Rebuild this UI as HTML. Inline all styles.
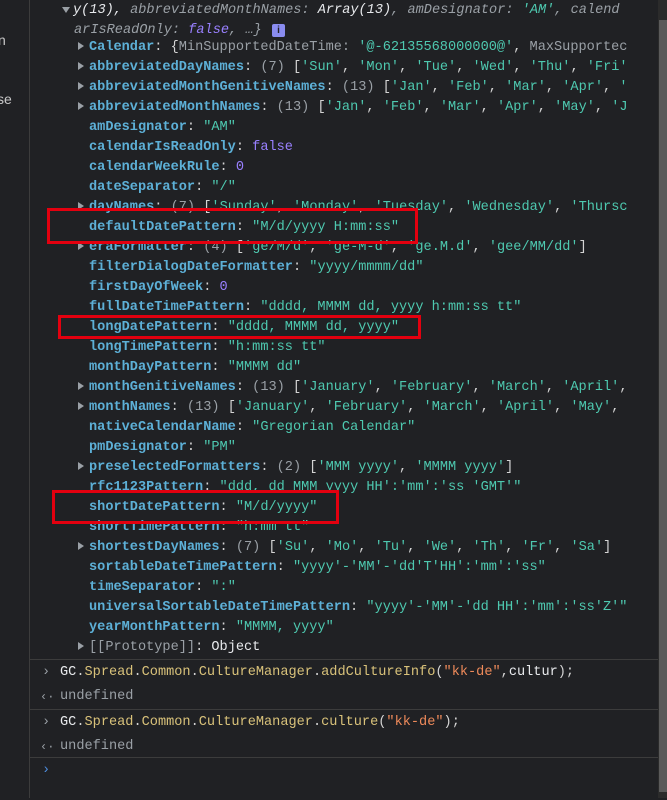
<!DOCTYPE html>
<html><head><meta charset="utf-8"><style>
html,body{margin:0;padding:0}
body{width:667px;height:798px;background:#202124;overflow:hidden;position:relative;font-family:"Liberation Mono",monospace;font-size:13.6px;color:#d4d4d4}
#c{position:absolute;left:0;top:2px;width:667px;height:798px}
.l{position:absolute;white-space:pre;height:20px;line-height:20px}
.k{color:#5db0d7;font-weight:bold}
.s{color:#4ec9b0}
.n{color:#9980ff}
.g{color:#9aa0a6}
.w{color:#e8eaed}
.y{color:#d9c27a}
.o{color:#ee8a5a}
.tri{position:absolute;left:78px;width:0;height:0;border-top:4px solid transparent;border-bottom:4px solid transparent;border-left:6px solid #9aa0a6}
.box{position:absolute;border:3.5px solid #e3000f;box-sizing:border-box}
.sep{position:absolute;left:30px;right:9px;height:1px;background:#3c3c3c}
</style></head><body>
<div style="position:absolute;left:0;top:0;width:29px;height:798px;background:#202124;border-right:1px solid #3c3c3c"></div>
<div style="position:absolute;left:658px;top:0;width:9px;height:798px;background:#2b2b2b"></div>
<div style="position:absolute;left:659px;top:20px;width:8px;height:772px;background:#5a5a5a"></div>
<div id="c">
<div class="l" style="left:-2px;top:28px;color:#c8c8c8;font-family:'Liberation Sans',sans-serif;font-size:14px">n</div>
<div class="l" style="left:-3px;top:87px;color:#c8c8c8;font-family:'Liberation Sans',sans-serif;font-size:14px">se</div>

<div style="position:absolute;left:62px;top:5px;width:0;height:0;border-left:4px solid transparent;border-right:4px solid transparent;border-top:6px solid #9aa0a6"></div>
<div class="l" style="left:73px;top:-1px;font-style:italic"><span class="w">y(13), </span><span class="g">abbreviatedMonthNames: </span><span class="w">Array(13)</span><span class="g">, amDesignator: </span><span class="s">'AM'</span><span class="g">, calend</span></div>
<div class="l" style="left:74px;top:19px;font-style:italic"><span class="g">arIsReadOnly: </span><span class="n">false</span><span class="g">, …}</span></div>
<div style="position:absolute;left:272px;top:22px;width:13px;height:13px;background:#8a8cf0;border-radius:2px;color:#202124;font:bold 10px 'Liberation Sans',sans-serif;text-align:center;line-height:13px">i</div>

<div class="tri" style="top:40px"></div><div class="l" style="left:89px;top:36px"><span class="k">Calendar</span>: {<span class="g">MinSupportedDateTime: </span><span class="s">'@-62135568000000@'</span>, <span class="g">MaxSupportec</span></div>
<div class="tri" style="top:60px"></div><div class="l" style="left:89px;top:56px"><span class="k">abbreviatedDayNames</span>: <span class="g">(7)</span> [<span class="s">'Sun'</span>, <span class="s">'Mon'</span>, <span class="s">'Tue'</span>, <span class="s">'Wed'</span>, <span class="s">'Thu'</span>, <span class="s">'Fri'</span></div>
<div class="tri" style="top:80px"></div><div class="l" style="left:89px;top:76px"><span class="k">abbreviatedMonthGenitiveNames</span>: <span class="g">(13)</span> [<span class="s">'Jan'</span>, <span class="s">'Feb'</span>, <span class="s">'Mar'</span>, <span class="s">'Apr'</span>, <span class="s">'</span></div>
<div class="tri" style="top:100px"></div><div class="l" style="left:89px;top:96px"><span class="k">abbreviatedMonthNames</span>: <span class="g">(13)</span> [<span class="s">'Jan'</span>, <span class="s">'Feb'</span>, <span class="s">'Mar'</span>, <span class="s">'Apr'</span>, <span class="s">'May'</span>, <span class="s">'J</span></div>
<div class="l" style="left:89px;top:116px"><span class="k">amDesignator</span>: <span class="s">"AM"</span></div>
<div class="l" style="left:89px;top:136px"><span class="k">calendarIsReadOnly</span>: <span class="n">false</span></div>
<div class="l" style="left:89px;top:156px"><span class="k">calendarWeekRule</span>: <span class="n">0</span></div>
<div class="l" style="left:89px;top:176px"><span class="k">dateSeparator</span>: <span class="s">"/"</span></div>
<div class="tri" style="top:200px"></div><div class="l" style="left:89px;top:196px"><span class="k">dayNames</span>: <span class="g">(7)</span> [<span class="s">'Sunday'</span>, <span class="s">'Monday'</span>, <span class="s">'Tuesday'</span>, <span class="s">'Wednesday'</span>, <span class="s">'Thursc</span></div>
<div class="l" style="left:89px;top:216px"><span class="k">defaultDatePattern</span>: <span class="s">"M/d/yyyy H:mm:ss"</span></div>
<div class="tri" style="top:240px"></div><div class="l" style="left:89px;top:236px"><span class="k">eraFormatter</span>: <span class="g">(4)</span> [<span class="s">'ge/M/d'</span>, <span class="s">'ge-M-d'</span>, <span class="s">'ge.M.d'</span>, <span class="s">'gee/MM/dd'</span>]</div>
<div class="l" style="left:89px;top:256px"><span class="k">filterDialogDateFormatter</span>: <span class="s">"yyyy/mmmm/dd"</span></div>
<div class="l" style="left:89px;top:276px"><span class="k">firstDayOfWeek</span>: <span class="n">0</span></div>
<div class="l" style="left:89px;top:296px"><span class="k">fullDateTimePattern</span>: <span class="s">"dddd, MMMM dd, yyyy h:mm:ss tt"</span></div>
<div class="l" style="left:89px;top:316px"><span class="k">longDatePattern</span>: <span class="s">"dddd, MMMM dd, yyyy"</span></div>
<div class="l" style="left:89px;top:336px"><span class="k">longTimePattern</span>: <span class="s">"h:mm:ss tt"</span></div>
<div class="l" style="left:89px;top:356px"><span class="k">monthDayPattern</span>: <span class="s">"MMMM dd"</span></div>
<div class="tri" style="top:380px"></div><div class="l" style="left:89px;top:376px"><span class="k">monthGenitiveNames</span>: <span class="g">(13)</span> [<span class="s">'January'</span>, <span class="s">'February'</span>, <span class="s">'March'</span>, <span class="s">'April'</span>,</div>
<div class="tri" style="top:400px"></div><div class="l" style="left:89px;top:396px"><span class="k">monthNames</span>: <span class="g">(13)</span> [<span class="s">'January'</span>, <span class="s">'February'</span>, <span class="s">'March'</span>, <span class="s">'April'</span>, <span class="s">'May'</span>,</div>
<div class="l" style="left:89px;top:416px"><span class="k">nativeCalendarName</span>: <span class="s">"Gregorian Calendar"</span></div>
<div class="l" style="left:89px;top:436px"><span class="k">pmDesignator</span>: <span class="s">"PM"</span></div>
<div class="tri" style="top:460px"></div><div class="l" style="left:89px;top:456px"><span class="k">preselectedFormatters</span>: <span class="g">(2)</span> [<span class="s">'MMM yyyy'</span>, <span class="s">'MMMM yyyy'</span>]</div>
<div class="l" style="left:89px;top:476px"><span class="k">rfc1123Pattern</span>: <span class="s">"ddd, dd MMM yyyy HH':'mm':'ss 'GMT'"</span></div>
<div class="l" style="left:89px;top:496px"><span class="k">shortDatePattern</span>: <span class="s">"M/d/yyyy"</span></div>
<div class="l" style="left:89px;top:516px"><span class="k">shortTimePattern</span>: <span class="s">"h:mm tt"</span></div>
<div class="tri" style="top:540px"></div><div class="l" style="left:89px;top:536px"><span class="k">shortestDayNames</span>: <span class="g">(7)</span> [<span class="s">'Su'</span>, <span class="s">'Mo'</span>, <span class="s">'Tu'</span>, <span class="s">'We'</span>, <span class="s">'Th'</span>, <span class="s">'Fr'</span>, <span class="s">'Sa'</span>]</div>
<div class="l" style="left:89px;top:556px"><span class="k">sortableDateTimePattern</span>: <span class="s">"yyyy'-'MM'-'dd'T'HH':'mm':'ss"</span></div>
<div class="l" style="left:89px;top:576px"><span class="k">timeSeparator</span>: <span class="s">":"</span></div>
<div class="l" style="left:89px;top:596px"><span class="k">universalSortableDateTimePattern</span>: <span class="s">"yyyy'-'MM'-'dd HH':'mm':'ss'Z'"</span></div>
<div class="l" style="left:89px;top:616px"><span class="k">yearMonthPattern</span>: <span class="s">"MMMM, yyyy"</span></div>
<div class="tri" style="top:640px"></div><div class="l" style="left:89px;top:636px"><span class="g">[[Prototype]]</span>: <span class="w">Object</span></div>

<div class="sep" style="top:657px"></div>
<div class="l g" style="left:42px;top:661px">›</div>
<div class="l" style="left:60px;top:661px"><span class="w">GC</span>.<span class="y">Spread</span>.<span class="y">Common</span>.<span class="y">CultureManager</span>.<span class="y">addCultureInfo</span>(<span class="o">"kk-de"</span>,<span class="w">cultur</span>);</div>
<div class="l g" style="left:40px;top:685px;font-size:12px">‹·</div>
<div class="l g" style="left:60px;top:685px">undefined</div>
<div class="sep" style="top:707px"></div>
<div class="l g" style="left:42px;top:711px">›</div>
<div class="l" style="left:60px;top:711px"><span class="w">GC</span>.<span class="y">Spread</span>.<span class="y">Common</span>.<span class="y">CultureManager</span>.<span class="y">culture</span>(<span class="o">"kk-de"</span>);</div>
<div class="l g" style="left:40px;top:735px;font-size:12px">‹·</div>
<div class="l g" style="left:60px;top:735px">undefined</div>
<div class="sep" style="top:755px"></div>
<div class="l" style="left:42px;top:759px;color:#4e8ee0">›</div>
</div>
<div class="box" style="left:47px;top:208px;width:371px;height:36px"></div>
<div class="box" style="left:58px;top:315px;width:363px;height:24px"></div>
<div class="box" style="left:52px;top:490px;width:287px;height:34px"></div>
</body></html>
